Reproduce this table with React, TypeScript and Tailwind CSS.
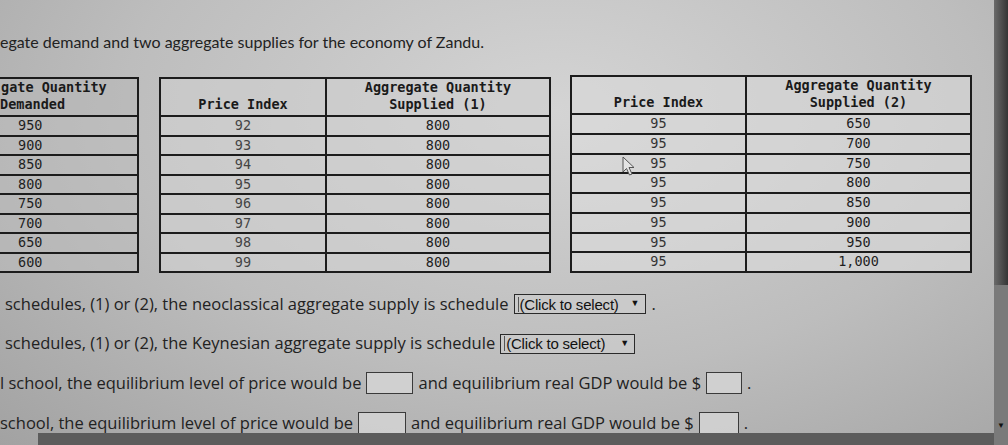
import React from 'react';

const mono = { fontFamily: '"DejaVu Sans Mono", "Liberation Mono", monospace' };
const title = { fontFamily: 'Lato, "Open Sans", sans-serif' };
const body = { fontFamily: '"Open Sans", Lato, sans-serif' };
const narrow = { fontFamily: '"Liberation Sans", Arial, sans-serif' };

const demanded = ['950', '900', '850', '800', '750', '700', '650', '600'];
const supply1 = [92, 93, 94, 95, 96, 97, 98, 99];
const supply2 = ['650', '700', '750', '800', '850', '900', '950', '1,000'];

const cell = 'border-2 border-[#1c1c1c] text-center align-middle leading-none';
const head = 'border-2 border-[#1c1c1c] text-center align-bottom pb-[2px] font-bold leading-[17px] text-[#1a1a1a]';

function SelectBox({ width }: { width: string }) {
  return (
    <span className={`inline-flex items-center h-[20px] ${width} border border-[#2a2a2a] bg-[#cfcfcf]/60 pl-[3px] pr-[5px] text-[15px] text-[#111] justify-between tracking-normal`} style={narrow}>
      <span className="border-l border-[#555] pl-[1px] leading-none tracking-[-0.2px]">(Click to select)</span>
      <span className="text-[9px]">▼</span>
    </span>
  );
}

function Blank({ width }: { width: string }) {
  return <span className={`inline-block h-[22px] ${width} border border-[#3a3a3a] bg-[#dadada]/70`} />;
}

export default function App() {
  return (
    <div className="relative w-[1008px] h-[445px] overflow-hidden bg-[radial-gradient(ellipse_at_55%_25%,#d4d4d4,#bdbdbd_55%,#a2a2a2)] text-[#1e1e1e]">
      <div className="flex flex-col">
        <p className="pt-[32px] h-[76px] text-[16px] leading-[20px] text-[#222]" style={title}>
          egate demand and two aggregate supplies for the economy of Zandu.
        </p>

        <div className="flex items-start text-[13.5px]" style={mono}>
          <table className="mt-[1px] w-[139px] border-collapse">
            <tbody>
              <tr className="h-[36px] bg-[#b8b8b8]/60">
                <th className="border-y-2 border-r-2 border-[#1c1c1c] text-left align-bottom pb-[2px] font-bold leading-[17px] text-[#1a1a1a]">
                  <span className="pl-[1px]">gate Quantity</span>
                  <br />
                  Demanded
                </th>
              </tr>
              {demanded.map((v) => (
                <tr key={v} className="h-[19.5px] bg-[#bdbdbd]/50">
                  <td className="border-y-2 border-r-2 border-[#1c1c1c] text-left pl-[18px] align-middle leading-none">{v}</td>
                </tr>
              ))}
            </tbody>
          </table>

          <table className="ml-[20px] mt-[1px] w-[392px] border-collapse">
            <tbody>
              <tr className="h-[36px] bg-[#cecece]/60">
                <th className={`${head} w-[166px]`}>Price Index</th>
                <th className={head}>Aggregate Quantity<br />Supplied (1)</th>
              </tr>
              {supply1.map((p) => (
                <tr key={p} className="h-[19.5px] bg-[#d2d2d2]/60">
                  <td className={`${cell} text-[#444]`}>{p}</td>
                  <td className={cell}>800</td>
                </tr>
              ))}
            </tbody>
          </table>

          <div className="relative ml-[19px] mt-[-1px]">
            <table className="w-[402px] border-collapse">
              <tbody>
                <tr className="h-[38px] bg-[#d8d8d8]/60">
                  <th className={`${head} w-[175px]`}>Price Index</th>
                  <th className={head}>Aggregate Quantity<br />Supplied (2)</th>
                </tr>
                {supply2.map((q) => (
                  <tr key={q} className="h-[19.75px] bg-[#dcdcdc]/60">
                    <td className={`${cell} text-[#333]`}>95</td>
                    <td className={cell}>{q}</td>
                  </tr>
                ))}
              </tbody>
            </table>
            {/* mouse pointer */}
            <svg className="absolute left-[52px] top-[81px]" width="14" height="20" viewBox="0 0 14 20">
              <path d="M1 1 L1 16 L4.5 12.5 L7.5 19 L10 18 L7 11.5 L12 11.5 Z" fill="#e4e4e4" stroke="#555" strokeWidth="1" strokeLinejoin="round" />
            </svg>
          </div>
        </div>

        <div className="mt-[11px] flex flex-col text-[16.5px] text-[#222]" style={body}>
          <div className="h-[40px] flex items-center gap-[5px] pl-[5px]">
            <span>schedules, (1) or (2), the neoclassical aggregate supply is schedule</span>
            <SelectBox width="w-[132px]" />
            <span className="ml-[1px]">.</span>
          </div>
          <div className="h-[39px] flex items-center gap-[5px] pl-[5px]">
            <span>schedules, (1) or (2), the Keynesian aggregate supply is schedule</span>
            <SelectBox width="w-[135px]" />
          </div>
          <div className="h-[40px] flex items-center gap-[5px]">
            <span>l school, the equilibrium level of price would be</span>
            <Blank width="w-[47px]" />
            <span>and equilibrium real GDP would be $</span>
            <Blank width="w-[36px]" />
            <span>.</span>
          </div>
          <div className="h-[40px] flex items-center gap-[5px]">
            <span>school, the equilibrium level of price would be</span>
            <Blank width="w-[48px]" />
            <span>and equilibrium real GDP would be $</span>
            <Blank width="w-[40px]" />
            <span>.</span>
          </div>
        </div>
      </div>

      {/* right scrollbar */}
      <div className="absolute right-0 top-0 w-[14px] h-full flex flex-col">
        <div className="h-[285px] bg-[linear-gradient(to_right,#6a6a6a,#353535)]" />
        <div className="flex-1 bg-[#7a7a7a] flex items-end justify-center pb-[16px]">
          <span className="text-[8px] text-[#111] leading-none">▼</span>
        </div>
      </div>
      {/* bottom scrollbar */}
      <div className="absolute left-[38px] right-[14px] bottom-0 h-[12px] bg-[#5c5c5c]" />
    </div>
  );
}
